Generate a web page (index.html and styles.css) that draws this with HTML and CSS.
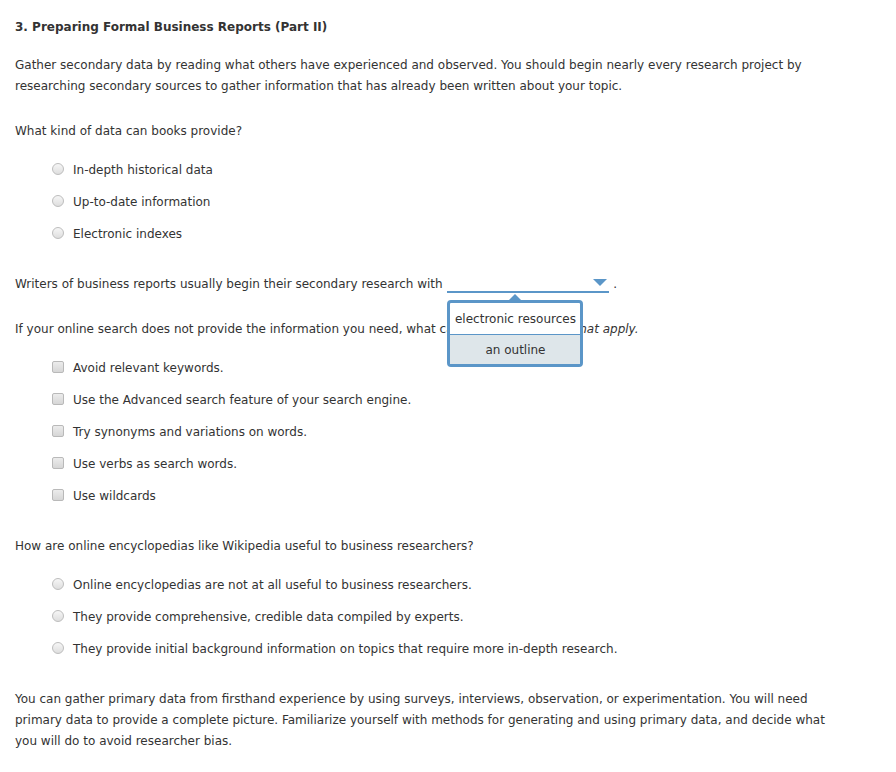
FILE: index.html
```html
<!DOCTYPE html>
<html lang="en">
<head>
<meta charset="utf-8">
<title>Preparing Formal Business Reports (Part II)</title>
<link rel="stylesheet" href="styles.css">
</head>
<body>
<div class="page">
  <h1 class="title">3. Preparing Formal Business Reports (Part II)</h1>

  <p class="text intro">Gather secondary data by reading what others have experienced and observed. You should begin nearly every research project by researching secondary sources to gather information that has already been written about your topic.</p>

  <p class="text question">What kind of data can books provide?</p>
  <ul class="options">
    <li class="option"><span class="radio"></span><span>In-depth historical data</span></li>
    <li class="option"><span class="radio"></span><span>Up-to-date information</span></li>
    <li class="option"><span class="radio"></span><span>Electronic indexes</span></li>
  </ul>

  <p class="text question after-options">Writers of business reports usually begin their secondary research with <span class="dropdown"><span class="caret"></span><span class="popup"><span class="pointer"></span><span class="item">electronic resources</span><span class="item alt">an outline</span></span></span> .</p>

  <p class="text question">If your online search does not provide the information you need, what can you do? <em>Check all that apply.</em></p>
  <ul class="options">
    <li class="option"><span class="check"></span><span>Avoid relevant keywords.</span></li>
    <li class="option"><span class="check"></span><span>Use the Advanced search feature of your search engine.</span></li>
    <li class="option"><span class="check"></span><span>Try synonyms and variations on words.</span></li>
    <li class="option"><span class="check"></span><span>Use verbs as search words.</span></li>
    <li class="option"><span class="check"></span><span>Use wildcards</span></li>
  </ul>

  <p class="text question after-options">How are online encyclopedias like Wikipedia useful to business researchers?</p>
  <ul class="options">
    <li class="option"><span class="radio"></span><span>Online encyclopedias are not at all useful to business researchers.</span></li>
    <li class="option"><span class="radio"></span><span>They provide comprehensive, credible data compiled by experts.</span></li>
    <li class="option"><span class="radio"></span><span>They provide initial background information on topics that require more in-depth research.</span></li>
  </ul>

  <p class="text after-options">You can gather primary data from firsthand experience by using surveys, interviews, observation, or experimentation. You will need primary data to provide a complete picture. Familiarize yourself with methods for generating and using primary data, and decide what you will do to avoid researcher bias.</p>
</div>
</body>
</html>
```

FILE: styles.css
```css
html, body {
  margin: 0;
  padding: 0;
  background: #ffffff;
}

.page {
  padding: 17px 15px 0 15px;
  width: 826px;
  font-family: "DejaVu Sans", Verdana, sans-serif;
  font-size: 12px;
  line-height: 21px;
  color: #333333;
}

.title {
  margin: 0;
  font-size: 12px;
  line-height: 21px;
  font-weight: bold;
  color: #333333;
}

.text {
  margin: 0;
}

.intro {
  margin-top: 17px;
}

.question {
  margin-top: 24px;
}

.after-options {
  margin-top: 29px;
}

.options {
  list-style: none;
  margin: 18px 0 0 0;
  padding: 0 0 0 37px;
  display: flex;
  flex-direction: column;
  gap: 11px;
}

.option {
  display: flex;
  align-items: center;
  gap: 9px;
  height: 21px;
}

.radio {
  width: 10px;
  height: 10px;
  border: 1px solid #bdbdbd;
  border-radius: 50%;
  background: linear-gradient(#f6f6f6, #dedede);
  flex: none;
  margin-top: -3px;
}

.check {
  width: 10px;
  height: 10px;
  border: 1px solid #b9b9b9;
  border-radius: 2px;
  background: linear-gradient(#ececec, #d6d6d6);
  flex: none;
  margin-top: -3px;
}

.dropdown {
  display: inline-block;
  position: relative;
  width: 162px;
  height: 16px;
  border-bottom: 2px solid #5b96c8;
  vertical-align: -5px;
  margin-left: 1px;
}

.caret {
  position: absolute;
  right: 2px;
  top: 4px;
  width: 0;
  height: 0;
  border-left: 7px solid transparent;
  border-right: 7px solid transparent;
  border-top: 7px solid #5b96c8;
}

.popup {
  position: absolute;
  left: 0;
  top: 25px;
  width: 130px;
  border: 3px solid #5b96c8;
  border-radius: 4px;
  background: #ffffff;
  display: flex;
  flex-direction: column;
  z-index: 10;
}

.pointer {
  position: absolute;
  left: 59px;
  top: -9px;
  width: 0;
  height: 0;
  border-left: 6px solid transparent;
  border-right: 6px solid transparent;
  border-bottom: 6px solid #5b96c8;
}

.item {
  display: block;
  height: 29px;
  padding-top: 2px;
  line-height: 29px;
  text-align: center;
  color: #333333;
  white-space: nowrap;
  border-bottom: 1px solid #5b96c8;
}

.item.alt {
  height: 28px;
  padding-top: 1px;
  line-height: 28px;
  border-bottom: none;
  background: #dee6ea;
}
```
